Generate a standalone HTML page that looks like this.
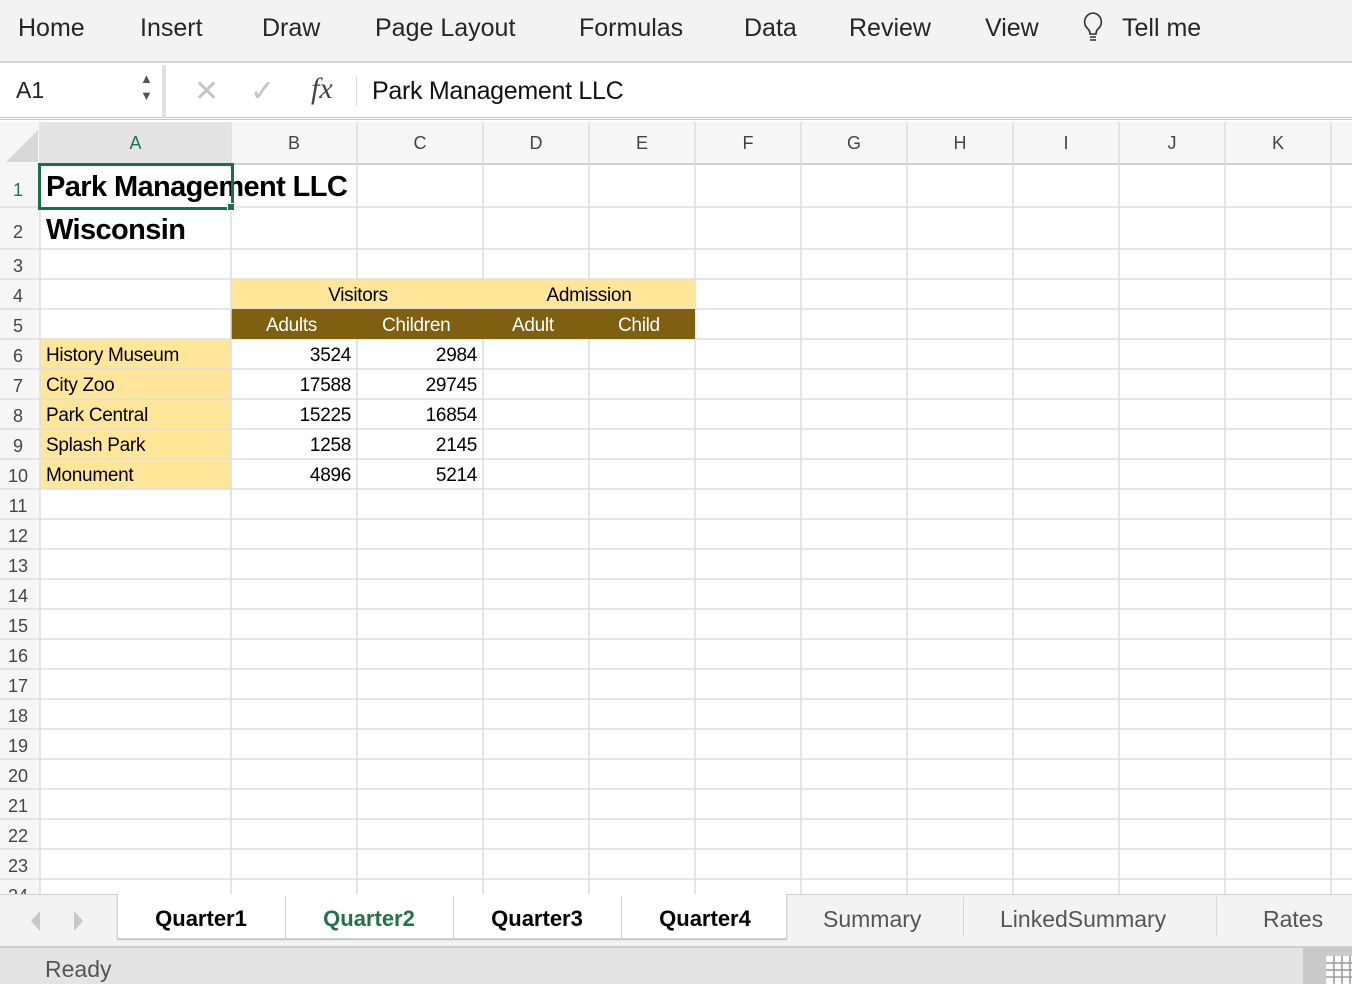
<!DOCTYPE html>
<html><head><meta charset="utf-8"><style>
*{margin:0;padding:0;box-sizing:border-box}
body{width:1352px;height:984px;overflow:hidden;background:#fff;font-family:"Liberation Sans",sans-serif;position:relative;color:#000}
.a{position:absolute;white-space:nowrap}
.rib{left:0;top:0;width:1352px;height:63px;background:#f3f3f3;border-bottom:2px solid #d6d6d6}
.rib span{position:absolute;top:14px;font-size:25px;color:#262626}
.c{font-family:"Liberation Sans",sans-serif;font-size:19px;letter-spacing:-0.3px;transform-origin:left}
.ch{top:122px;height:43px;font-size:18px;color:#444;text-align:center;line-height:43px}
.rn{left:0;width:36px;text-align:center;font-size:18px;color:#444}
</style></head><body>
<div class="a rib">
<span style="left:18px">Home</span><span style="left:140px">Insert</span><span style="left:262px">Draw</span><span style="left:375px">Page Layout</span><span style="left:579px">Formulas</span><span style="left:744px">Data</span><span style="left:849px">Review</span><span style="left:985px">View</span><span style="left:1122px">Tell me</span>
<svg style="position:absolute;left:1080px;top:10px" width="26" height="34" viewBox="0 0 26 34"><path d="M13 3a9 9 0 0 0-5 16c1 1 2 3 2 5h6c0-2 1-4 2-5A9 9 0 0 0 13 3z" fill="none" stroke="#333" stroke-width="1.6"/><path d="M10 27h6M10 30h6" stroke="#333" stroke-width="1.6"/></svg>
</div>
<div class="a" style="left:0;top:65px;width:1352px;height:55px;background:#fff;border-bottom:3px double #c8c8c8"></div>
<div class="a" style="left:0;top:65px;width:166px;height:53px;border-right:4px solid #e0e0e0"></div>
<div class="a" style="left:16px;top:77px;font-size:23px;color:#222">A1</div>
<div class="a" style="left:140px;top:70px;font-size:13px;color:#555;line-height:17px">▲<br>▼</div>
<div class="a" style="left:194px;top:74px;font-size:30px;color:#c4c4c4">✕</div>
<div class="a" style="left:250px;top:74px;font-size:30px;color:#c4c4c4">✓</div>
<div class="a" style="left:311px;top:72px;font-size:30px;font-family:'Liberation Serif',serif;font-style:italic;color:#444">fx</div>
<div class="a" style="left:356px;top:76px;width:1px;height:30px;background:#ddd"></div>
<div class="a c" style="left:372px;top:77px;font-size:25px;color:#111">Park Management LLC</div>

<div class="a" style="left:0;top:122px;width:1352px;height:43px;background:#f6f6f6;border-bottom:2px solid #d0d0d0"></div>
<div class="a" style="left:0;top:122px;width:40px;height:862px;background:#f6f6f6"></div>
<div class="a" style="left:40px;top:122px;width:191px;height:43px;background:#e4e4e4"></div>
<svg class="a" style="left:4px;top:128px" width="34" height="34"><path d="M34 2V34H2z" fill="#d8d8d8"/></svg>
<div class="a ch" style="left:40px;width:191px;color:#217346">A</div>
<div class="a ch" style="left:231px;width:126px">B</div>
<div class="a ch" style="left:357px;width:126px">C</div>
<div class="a ch" style="left:483px;width:106px">D</div>
<div class="a ch" style="left:589px;width:106px">E</div>
<div class="a ch" style="left:695px;width:106px">F</div>
<div class="a ch" style="left:801px;width:106px">G</div>
<div class="a ch" style="left:907px;width:106px">H</div>
<div class="a ch" style="left:1013px;width:106px">I</div>
<div class="a ch" style="left:1119px;width:106px">J</div>
<div class="a ch" style="left:1225px;width:106px">K</div>

<div class="a" style="left:231px;top:279px;width:464px;height:30px;background:#ffe699"></div>
<div class="a" style="left:231px;top:309px;width:464px;height:30px;background:#7f6011"></div>
<div class="a" style="left:40px;top:339px;width:191px;height:150px;background:#ffe699"></div>

<svg class="a" style="left:0;top:122px" width="1352" height="772">
<g stroke="#dedede" stroke-width="1.5">
<path d="M40 0V772M231 0V772M357 0V772M483 0V772M589 0V772M695 0V772M801 0V772M907 0V772M1013 0V772M1119 0V772M1225 0V772M1331 0V772"/>
<path d="M0 85H1352M0 127H1352M0 157H1352M0 187H1352M0 217H1352M0 247H1352M0 277H1352M0 307H1352M0 337H1352M0 367H1352M0 397H1352M0 427H1352M0 457H1352M0 487H1352M0 517H1352M0 547H1352M0 577H1352M0 607H1352M0 637H1352M0 667H1352M0 697H1352M0 727H1352M0 757H1352"/>
</g>
</svg>
<div class="a" style="left:232px;top:280px;width:463px;height:28px;background:#ffe699"></div>
<div class="a" style="left:232px;top:309px;width:463px;height:30px;background:#7f6011"></div>

<div class="a rn" style="top:180px;color:#217346">1</div>
<div class="a rn" style="top:222px">2</div>
<div class="a rn" style="top:256px">3</div>
<div class="a rn" style="top:286px">4</div>
<div class="a rn" style="top:316px">5</div>
<div class="a rn" style="top:346px">6</div>
<div class="a rn" style="top:376px">7</div>
<div class="a rn" style="top:406px">8</div>
<div class="a rn" style="top:436px">9</div>
<div class="a rn" style="top:466px">10</div>
<div class="a rn" style="top:496px">11</div>
<div class="a rn" style="top:526px">12</div>
<div class="a rn" style="top:556px">13</div>
<div class="a rn" style="top:586px">14</div>
<div class="a rn" style="top:616px">15</div>
<div class="a rn" style="top:646px">16</div>
<div class="a rn" style="top:676px">17</div>
<div class="a rn" style="top:706px">18</div>
<div class="a rn" style="top:736px">19</div>
<div class="a rn" style="top:766px">20</div>
<div class="a rn" style="top:796px">21</div>
<div class="a rn" style="top:826px">22</div>
<div class="a rn" style="top:856px">23</div>
<div class="a rn" style="top:886px">24</div>

<div class="a" style="left:42px;top:170px;width:190px;height:38px;background:#fff"></div>
<div class="a c" style="left:46px;top:171px;font-size:29px;font-weight:bold;letter-spacing:-0.6px">Park Management LLC</div>
<div class="a" style="left:38px;top:163px;width:196px;height:47px;border:3px solid #1e6e45"></div>
<div class="a" style="left:227px;top:203px;width:8px;height:8px;background:#1e6e45;border:1px solid #fff"></div>
<div class="a c" style="left:46px;top:214px;font-size:29px;font-weight:bold;letter-spacing:-0.6px">Wisconsin</div>

<div class="a c" style="left:231px;width:254px;top:285px;text-align:center">Visitors</div>
<div class="a c" style="left:483px;width:212px;top:285px;text-align:center">Admission</div>
<div class="a c" style="left:266px;top:315px;color:#fff">Adults</div>
<div class="a c" style="left:382px;top:315px;color:#fff">Children</div>
<div class="a c" style="left:512px;top:315px;color:#fff">Adult</div>
<div class="a c" style="left:618px;top:315px;color:#fff">Child</div>

<div class="a c" style="left:46px;top:345px">History Museum</div>
<div class="a c" style="left:46px;top:375px">City Zoo</div>
<div class="a c" style="left:46px;top:405px">Park Central</div>
<div class="a c" style="left:46px;top:435px">Splash Park</div>
<div class="a c" style="left:46px;top:465px">Monument</div>
<div class="a c" style="right:1001px;top:345px">3524</div>
<div class="a c" style="right:1001px;top:375px">17588</div>
<div class="a c" style="right:1001px;top:405px">15225</div>
<div class="a c" style="right:1001px;top:435px">1258</div>
<div class="a c" style="right:1001px;top:465px">4896</div>
<div class="a c" style="right:875px;top:345px">2984</div>
<div class="a c" style="right:875px;top:375px">29745</div>
<div class="a c" style="right:875px;top:405px">16854</div>
<div class="a c" style="right:875px;top:435px">2145</div>
<div class="a c" style="right:875px;top:465px">5214</div>

<div class="a" style="left:0;top:894px;width:1352px;height:52px;background:#f3f3f3;border-top:1px solid #d0d0d0"></div>
<svg class="a" style="left:24px;top:910px" width="70" height="22"><path d="M16 1L7 11L16 21z" fill="#c8c8c8"/><path d="M50 1L59 11L50 21z" fill="#c8c8c8"/></svg>
<div class="a" style="left:117px;top:894px;width:670px;height:45px;background:#fff;border:1px solid #d0d0d0;border-top:none;box-shadow:0 1px 1px #bbb"></div>
<div class="a" style="left:285px;top:896px;width:1px;height:42px;background:#d0d0d0"></div>
<div class="a" style="left:453px;top:896px;width:1px;height:42px;background:#d0d0d0"></div>
<div class="a" style="left:621px;top:896px;width:1px;height:42px;background:#d0d0d0"></div>
<div class="a" style="left:963px;top:897px;width:1px;height:40px;background:#d8d8d8"></div>
<div class="a" style="left:1216px;top:897px;width:1px;height:40px;background:#d8d8d8"></div>
<div class="a" style="left:117px;width:168px;top:906px;text-align:center;font-size:22px;font-weight:bold">Quarter1</div>
<div class="a" style="left:285px;width:168px;top:906px;text-align:center;font-size:22px;font-weight:bold;color:#217346">Quarter2</div>
<div class="a" style="left:453px;width:168px;top:906px;text-align:center;font-size:22px;font-weight:bold">Quarter3</div>
<div class="a" style="left:621px;width:168px;top:906px;text-align:center;font-size:22px;font-weight:bold">Quarter4</div>
<div class="a" style="left:823px;top:906px;font-size:23px;color:#555">Summary</div>
<div class="a" style="left:1000px;top:906px;font-size:23px;color:#555">LinkedSummary</div>
<div class="a" style="left:1263px;top:906px;font-size:23px;color:#555">Rates</div>

<div class="a" style="left:0;top:946px;width:1352px;height:38px;background:#e4e4e4;border-top:2px solid #cfcfcf"></div>
<div class="a" style="left:45px;top:956px;font-size:23px;color:#555">Ready</div>
<div class="a" style="left:1303px;top:948px;width:49px;height:36px;background:#c9c9c9"></div>
<svg class="a" style="left:1326px;top:956px" width="26" height="28"><rect x="0" y="0" width="26" height="28" fill="#fff"/><g stroke="#999" stroke-width="1.5"><path d="M0 7H26M0 14H26M0 21H26M8 0V28M16 0V28M24 0V28"/></g></svg>
</body></html>
